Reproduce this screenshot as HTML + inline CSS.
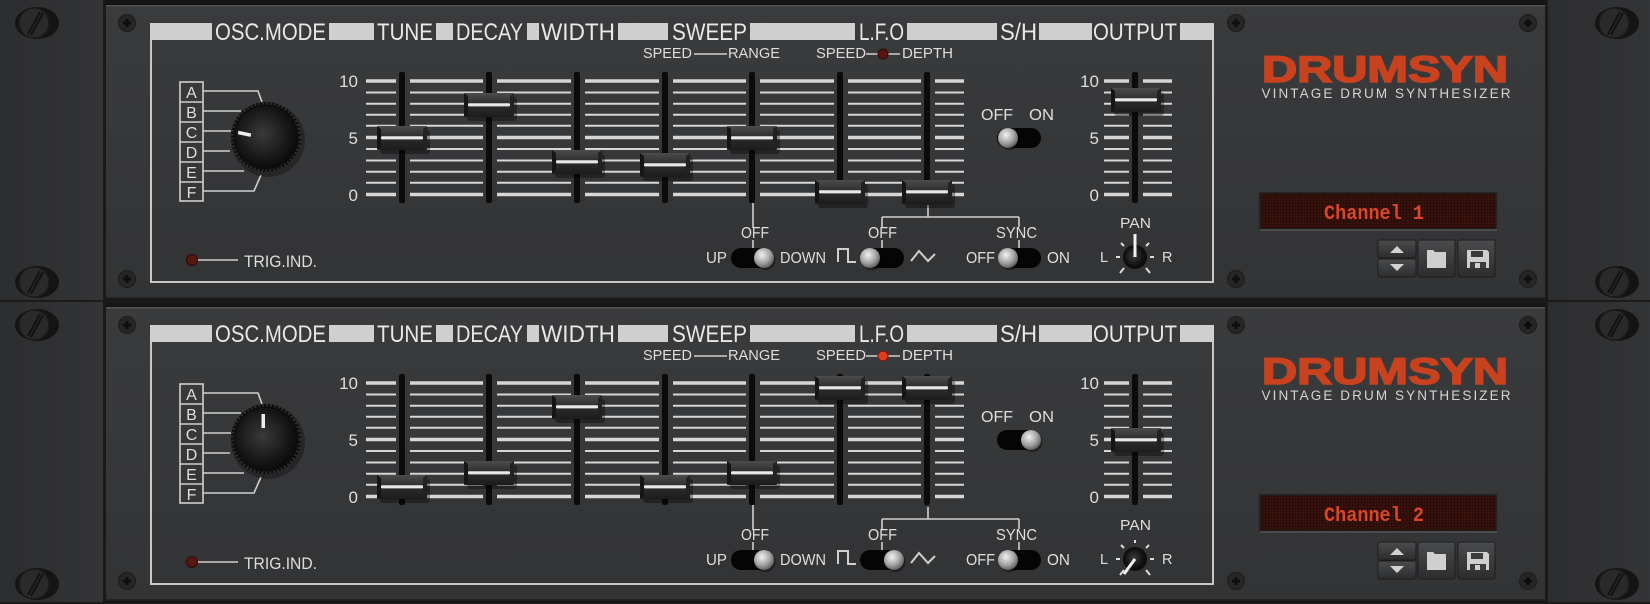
<!DOCTYPE html>
<html><head><meta charset="utf-8"><style>
html,body{margin:0;padding:0;background:#151515;width:1650px;height:604px;overflow:hidden}
svg{display:block}
text{font-family:"Liberation Sans",sans-serif}
</style></head><body>
<svg width="1650" height="604" viewBox="0 0 1650 604" xmlns="http://www.w3.org/2000/svg">
<defs>
<linearGradient id="pg" x1="0" y1="0" x2="0" y2="1"><stop offset="0" stop-color="#3a3b3d"/><stop offset="1" stop-color="#323335"/></linearGradient>
<linearGradient id="eg" x1="0" y1="0" x2="1" y2="0"><stop offset="0" stop-color="#2c2d2f"/><stop offset="1" stop-color="#333436"/></linearGradient>
<linearGradient id="hg" x1="0" y1="0" x2="0" y2="1"><stop offset="0" stop-color="#4c4c4c"/><stop offset=".45" stop-color="#2e2e2e"/><stop offset="1" stop-color="#1c1c1c"/></linearGradient>
<radialGradient id="bg" cx=".4" cy=".35" r=".7"><stop offset="0" stop-color="#f2f2f2"/><stop offset=".6" stop-color="#a0a0a0"/><stop offset="1" stop-color="#555"/></radialGradient>
<radialGradient id="kg" cx=".45" cy=".45" r=".6"><stop offset="0" stop-color="#3a3a3a"/><stop offset=".7" stop-color="#161616"/><stop offset="1" stop-color="#080808"/></radialGradient>
<linearGradient id="btn" x1="0" y1="0" x2="0" y2="1"><stop offset="0" stop-color="#4a4b4d"/><stop offset="1" stop-color="#2c2d2f"/></linearGradient>
<pattern id="dots" width="3" height="3" patternUnits="userSpaceOnUse"><rect width="3" height="3" fill="#2a0d08"/><rect width="2" height="2" fill="#3a140c"/></pattern>

<g id="seg" stroke="#d6d6d6">
<path d="M366,0H396M410,0H483M497,0H571M585,0H659M673,0H746M760,0H834M848,0H921M935,0H964M1104,0H1129M1143,0H1172"/>
</g>
<g id="handle">
<rect x="-22" y="-8" width="50" height="24" fill="#000" opacity=".35" rx="3"/>
<rect x="-25" y="-12" width="50" height="24" fill="url(#hg)" rx="2"/>
<path d="M-25,-12L-21,-9V9L-25,12Z" fill="#151515"/>
<path d="M25,-12L21,-9V9L25,12Z" fill="#222"/>
<rect x="-21" y="-1.8" width="42" height="3.2" fill="#e8e8e8" rx="1"/>
</g>
<g id="ball"><circle cx="1.5" cy="2" r="10" fill="#000" opacity=".4"/><circle r="10" fill="url(#bg)"/></g>
<g id="pscrew"><circle r="9" fill="#1c1c1c"/><circle r="8" fill="#262626"/><path d="M-4,0H4M0,-4V4" stroke="#0e0e0e" stroke-width="3"/></g>
<g id="escrew"><ellipse rx="22" ry="16" fill="#141414"/><circle cx="-3" r="15" fill="#2a2a2a"/><circle cx="-3" r="15" fill="none" stroke="#1a1a1a" stroke-width="1.5"/><path d="M-9,11L3,-11M-6,12L6,-10" stroke="#121212" stroke-width="2"/></g>

<g id="static">
<rect x="0" y="0" width="105" height="302" fill="url(#eg)"/>
<rect x="103" y="0" width="3" height="302" fill="#1a1a1a"/>
<rect x="1545" y="0" width="105" height="302" fill="url(#eg)"/>
<rect x="1545" y="0" width="3" height="302" fill="#1a1a1a"/>
<rect x="0" y="300" width="1650" height="3" fill="#1b1b1b"/>
<use href="#escrew" x="37" y="23"/><use href="#escrew" x="37" y="282"/>
<use href="#escrew" x="1617" y="23"/><use href="#escrew" x="1617" y="282"/>
<rect x="106" y="5" width="1439" height="294" fill="url(#pg)"/>
<rect x="106" y="5" width="1439" height="1.5" fill="#505153"/>
<rect x="106" y="297" width="1439" height="2" fill="#222"/>
<use href="#pscrew" x="127" y="23"/><use href="#pscrew" x="127" y="279"/>
<use href="#pscrew" x="1236" y="23"/><use href="#pscrew" x="1236" y="279"/>
<use href="#pscrew" x="1528" y="23"/><use href="#pscrew" x="1528" y="279"/>
<g fill="#cfcfcf">
<rect x="150" y="23" width="62" height="17"/><rect x="329" y="23" width="45" height="17"/>
<rect x="436" y="23" width="17" height="17"/><rect x="527" y="23" width="12" height="17"/>
<rect x="618" y="23" width="50" height="17"/><rect x="750" y="23" width="105" height="17"/>
<rect x="907" y="23" width="90" height="17"/><rect x="1039" y="23" width="53" height="17"/>
<rect x="1180" y="23" width="34" height="17"/>
</g>
<path d="M151,40V282H1213V40" fill="none" stroke="#c8c8c8" stroke-width="2"/>
<g stroke-width="2"><use href="#seg" y="92.5"/><use href="#seg" y="103.7"/><use href="#seg" y="114.7"/><use href="#seg" y="125.7"/><use href="#seg" y="149"/><use href="#seg" y="160.5"/><use href="#seg" y="171.7"/><use href="#seg" y="182.7"/></g>
<g stroke-width="3.6"><use href="#seg" y="81"/><use href="#seg" y="137.5"/><use href="#seg" y="194.5"/></g>
<g fill="#0b0b0b"><rect x="399" y="72" width="6" height="131" rx="2"/><rect x="486" y="72" width="6" height="131" rx="2"/><rect x="574" y="72" width="6" height="131" rx="2"/><rect x="662" y="72" width="6" height="131" rx="2"/><rect x="749" y="72" width="6" height="131" rx="2"/><rect x="837" y="72" width="6" height="131" rx="2"/><rect x="924" y="72" width="6" height="131" rx="2"/><rect x="1132" y="72" width="6" height="131" rx="2"/></g>
<g fill="none" stroke="#cfcfcf" stroke-width="1.6">
<rect x="180" y="82" width="23" height="119"/>
<path d="M180,102H203M180,122H203M180,142H203M180,162H203M180,182H203"/>
<path d="M203,91H258L262,102M203,111H241M203,131H231M203,151H230M203,171H244M203,191H254L261,175"/>
<path d="M198,260H238"/>
<path d="M694,54H727"/>
<path d="M866,54H900"/>
<path d="M753,203V228M753,240V248M928,205V217M882,217H1019M882,217V227M1019,217V227M882,240V248M1019,240V248"/>
<path d="M838,262V249H848V262H856" stroke-width="2"/>
<path d="M911,261L919,251L928,261L935,254" stroke-width="2"/>
</g>
<circle cx="268" cy="140" r="37" fill="#000" opacity=".3"/>
<circle cx="266" cy="137" r="35" fill="#0d0d0d"/>
<circle cx="266" cy="137" r="34" fill="none" stroke="#2c2c2c" stroke-width="3" stroke-dasharray="2 2"/>
<circle cx="266" cy="137" r="31" fill="url(#kg)"/>
<circle cx="192" cy="260" r="5.5" fill="#5a1610" stroke="#2a0a06"/>
<rect x="1260" y="193" width="236" height="36" fill="url(#dots)"/>
<rect x="1260" y="193" width="236" height="36" fill="none" stroke="#1e1e1e" stroke-width="1.5"/>
<path d="M1260,230H1497" stroke="#55565a" stroke-width="1.5"/>
<rect x="1378" y="240" width="38" height="18" rx="2" fill="url(#btn)" stroke="#1d1d1d"/>
<rect x="1378" y="259" width="38" height="18" rx="2" fill="url(#btn)" stroke="#1d1d1d"/>
<rect x="1418" y="240" width="37" height="37" rx="2" fill="url(#btn)" stroke="#1d1d1d"/>
<rect x="1458" y="240" width="37" height="37" rx="2" fill="url(#btn)" stroke="#1d1d1d"/>
<path d="M1390,253L1397,246L1404,253Z M1390,264L1404,264L1397,271Z" fill="#d2d2d2"/>
<path d="M1427,250H1433L1435,252H1446V268H1427Z" fill="#cfcfcf"/>
<path d="M1467,250H1487L1489,252V268H1467Z" fill="#cfcfcf"/>
<rect x="1471" y="251" width="12" height="6" fill="#3a3b3d"/>
<rect x="1470" y="262" width="16" height="6" fill="#3a3b3d"/>
<rect x="1475" y="263" width="5" height="5" fill="#cfcfcf"/>
<g stroke="#dcdcdc" stroke-width="2">
<path d="M1120,257H1116M1150,257H1154M1124,246L1121,243M1146,246L1149,243M1135,241V238M1124,268L1120,273M1146,268L1150,273"/>
</g>
<circle cx="1135" cy="257" r="12" fill="#0e0e0e"/>
<circle cx="1135" cy="257" r="10" fill="url(#kg)"/>
<rect x="997" y="128" width="44" height="20" rx="10" fill="#050505"/>
<rect x="731" y="248" width="43" height="20" rx="10" fill="#050505"/>
<rect x="860" y="248" width="44" height="20" rx="10" fill="#050505"/>
<rect x="999" y="248" width="42" height="20" rx="10" fill="#050505"/>
</g>
</defs>

<!-- UNIT 1 -->
<g>
<use href="#static"/>
<g fill="#e8e8e8" font-size="24">
<text x="215" y="40" textLength="111" lengthAdjust="spacingAndGlyphs">OSC.MODE</text>
<text x="377" y="40" textLength="56" lengthAdjust="spacingAndGlyphs">TUNE</text>
<text x="456" y="40" textLength="67" lengthAdjust="spacingAndGlyphs">DECAY</text>
<text x="541" y="40" textLength="74" lengthAdjust="spacingAndGlyphs">WIDTH</text>
<text x="672" y="40" textLength="75" lengthAdjust="spacingAndGlyphs">SWEEP</text>
<text x="859" y="40" textLength="45" lengthAdjust="spacingAndGlyphs">L.F.O</text>
<text x="1000" y="40" textLength="37" lengthAdjust="spacingAndGlyphs">S/H</text>
<text x="1093" y="40" textLength="84" lengthAdjust="spacingAndGlyphs">OUTPUT</text>
</g>
<g fill="#dedede" font-size="17">
<text x="191.5" y="98" text-anchor="middle" font-size="16">A</text>
<text x="191.5" y="118" text-anchor="middle" font-size="16">B</text>
<text x="191.5" y="138" text-anchor="middle" font-size="16">C</text>
<text x="191.5" y="158" text-anchor="middle" font-size="16">D</text>
<text x="191.5" y="178" text-anchor="middle" font-size="16">E</text>
<text x="191.5" y="198" text-anchor="middle" font-size="16">F</text>
<text x="358" y="87" text-anchor="end">10</text><text x="358" y="144" text-anchor="end">5</text><text x="358" y="201" text-anchor="end">0</text>
<text x="1099" y="87" text-anchor="end">10</text><text x="1099" y="144" text-anchor="end">5</text><text x="1099" y="201" text-anchor="end">0</text>
<text x="244" y="267" textLength="73" lengthAdjust="spacingAndGlyphs">TRIG.IND.</text>
</g>
<g fill="#dedede" font-size="14.5">
<text x="643" y="58" textLength="49" lengthAdjust="spacingAndGlyphs">SPEED</text>
<text x="728" y="58" textLength="52" lengthAdjust="spacingAndGlyphs">RANGE</text>
<text x="816" y="58" textLength="50" lengthAdjust="spacingAndGlyphs">SPEED</text>
<text x="902" y="58" textLength="51" lengthAdjust="spacingAndGlyphs">DEPTH</text>
<text x="981" y="120" font-size="15.5" textLength="32" lengthAdjust="spacingAndGlyphs">OFF</text>
<text x="1029" y="120" font-size="15.5" textLength="25" lengthAdjust="spacingAndGlyphs">ON</text>
<text x="741" y="238" font-size="15.5" textLength="28" lengthAdjust="spacingAndGlyphs">OFF</text>
<text x="868" y="238" font-size="15.5" textLength="29" lengthAdjust="spacingAndGlyphs">OFF</text>
<text x="996" y="238" font-size="15.5" textLength="41" lengthAdjust="spacingAndGlyphs">SYNC</text>
<text x="706" y="263" font-size="15.5" textLength="21" lengthAdjust="spacingAndGlyphs">UP</text>
<text x="780" y="263" font-size="15.5" textLength="46" lengthAdjust="spacingAndGlyphs">DOWN</text>
<text x="966" y="263" font-size="15.5" textLength="29" lengthAdjust="spacingAndGlyphs">OFF</text>
<text x="1047" y="263" font-size="15.5" textLength="23" lengthAdjust="spacingAndGlyphs">ON</text>
<text x="1120" y="228" textLength="31" lengthAdjust="spacingAndGlyphs">PAN</text>
<text x="1100" y="262">L</text><text x="1162" y="262">R</text>
</g>
<circle cx="883" cy="54" r="5" fill="#5a1610" stroke="#2a0a06"/>
<rect x="238" y="132" width="13" height="3.5" fill="#eee" transform="rotate(12 244 134)"/>
<path d="M1135,257V234" stroke="#f0f0f0" stroke-width="3"/>
<use href="#ball" x="1008" y="138"/><use href="#ball" x="764" y="258"/><use href="#ball" x="870" y="258"/><use href="#ball" x="1008" y="258"/>
<use href="#handle" x="402" y="138"/><use href="#handle" x="489" y="105"/><use href="#handle" x="577" y="162"/><use href="#handle" x="665" y="165"/><use href="#handle" x="752" y="138"/><use href="#handle" x="840" y="192"/><use href="#handle" x="927" y="192"/>
<use href="#handle" x="1136" y="100"/>
<text x="1385" y="82" text-anchor="middle" font-size="37" font-weight="bold" fill="#c8421f" stroke="#c8421f" stroke-width="1.6" textLength="246" lengthAdjust="spacingAndGlyphs">DRUMSYN</text>
<text x="1386" y="98" text-anchor="middle" font-size="13.5" fill="#d4d4d4" textLength="249" lengthAdjust="spacing">VINTAGE DRUM SYNTHESIZER</text>
<text x="1374" y="219" text-anchor="middle" font-size="20" font-weight="bold" fill="#d9462a" style="font-family:'Liberation Mono',monospace" textLength="100" lengthAdjust="spacingAndGlyphs">Channel 1</text>
</g>

<!-- UNIT 2 -->
<g transform="translate(0,302)">
<use href="#static"/>
<g fill="#e8e8e8" font-size="24">
<text x="215" y="40" textLength="111" lengthAdjust="spacingAndGlyphs">OSC.MODE</text>
<text x="377" y="40" textLength="56" lengthAdjust="spacingAndGlyphs">TUNE</text>
<text x="456" y="40" textLength="67" lengthAdjust="spacingAndGlyphs">DECAY</text>
<text x="541" y="40" textLength="74" lengthAdjust="spacingAndGlyphs">WIDTH</text>
<text x="672" y="40" textLength="75" lengthAdjust="spacingAndGlyphs">SWEEP</text>
<text x="859" y="40" textLength="45" lengthAdjust="spacingAndGlyphs">L.F.O</text>
<text x="1000" y="40" textLength="37" lengthAdjust="spacingAndGlyphs">S/H</text>
<text x="1093" y="40" textLength="84" lengthAdjust="spacingAndGlyphs">OUTPUT</text>
</g>
<g fill="#dedede" font-size="17">
<text x="191.5" y="98" text-anchor="middle" font-size="16">A</text>
<text x="191.5" y="118" text-anchor="middle" font-size="16">B</text>
<text x="191.5" y="138" text-anchor="middle" font-size="16">C</text>
<text x="191.5" y="158" text-anchor="middle" font-size="16">D</text>
<text x="191.5" y="178" text-anchor="middle" font-size="16">E</text>
<text x="191.5" y="198" text-anchor="middle" font-size="16">F</text>
<text x="358" y="87" text-anchor="end">10</text><text x="358" y="144" text-anchor="end">5</text><text x="358" y="201" text-anchor="end">0</text>
<text x="1099" y="87" text-anchor="end">10</text><text x="1099" y="144" text-anchor="end">5</text><text x="1099" y="201" text-anchor="end">0</text>
<text x="244" y="267" textLength="73" lengthAdjust="spacingAndGlyphs">TRIG.IND.</text>
</g>
<g fill="#dedede" font-size="14.5">
<text x="643" y="58" textLength="49" lengthAdjust="spacingAndGlyphs">SPEED</text>
<text x="728" y="58" textLength="52" lengthAdjust="spacingAndGlyphs">RANGE</text>
<text x="816" y="58" textLength="50" lengthAdjust="spacingAndGlyphs">SPEED</text>
<text x="902" y="58" textLength="51" lengthAdjust="spacingAndGlyphs">DEPTH</text>
<text x="981" y="120" font-size="15.5" textLength="32" lengthAdjust="spacingAndGlyphs">OFF</text>
<text x="1029" y="120" font-size="15.5" textLength="25" lengthAdjust="spacingAndGlyphs">ON</text>
<text x="741" y="238" font-size="15.5" textLength="28" lengthAdjust="spacingAndGlyphs">OFF</text>
<text x="868" y="238" font-size="15.5" textLength="29" lengthAdjust="spacingAndGlyphs">OFF</text>
<text x="996" y="238" font-size="15.5" textLength="41" lengthAdjust="spacingAndGlyphs">SYNC</text>
<text x="706" y="263" font-size="15.5" textLength="21" lengthAdjust="spacingAndGlyphs">UP</text>
<text x="780" y="263" font-size="15.5" textLength="46" lengthAdjust="spacingAndGlyphs">DOWN</text>
<text x="966" y="263" font-size="15.5" textLength="29" lengthAdjust="spacingAndGlyphs">OFF</text>
<text x="1047" y="263" font-size="15.5" textLength="23" lengthAdjust="spacingAndGlyphs">ON</text>
<text x="1120" y="228" textLength="31" lengthAdjust="spacingAndGlyphs">PAN</text>
<text x="1100" y="262">L</text><text x="1162" y="262">R</text>
</g>
<circle cx="883" cy="54" r="5" fill="#e23a1e" stroke="#7a1a0c"/>
<rect x="261.5" y="112" width="3.5" height="14" fill="#eee"/>
<path d="M1135,257L1124,272" stroke="#f0f0f0" stroke-width="3"/>
<use href="#ball" x="1031" y="138"/><use href="#ball" x="764" y="258"/><use href="#ball" x="894" y="258"/><use href="#ball" x="1008" y="258"/>
<use href="#handle" x="402" y="185"/><use href="#handle" x="489" y="171"/><use href="#handle" x="577" y="105"/><use href="#handle" x="665" y="185"/><use href="#handle" x="752" y="171"/><use href="#handle" x="840" y="86"/><use href="#handle" x="927" y="86"/>
<use href="#handle" x="1136" y="138"/>
<text x="1385" y="82" text-anchor="middle" font-size="37" font-weight="bold" fill="#c8421f" stroke="#c8421f" stroke-width="1.6" textLength="246" lengthAdjust="spacingAndGlyphs">DRUMSYN</text>
<text x="1386" y="98" text-anchor="middle" font-size="13.5" fill="#d4d4d4" textLength="249" lengthAdjust="spacing">VINTAGE DRUM SYNTHESIZER</text>
<text x="1374" y="219" text-anchor="middle" font-size="20" font-weight="bold" fill="#d9462a" style="font-family:'Liberation Mono',monospace" textLength="100" lengthAdjust="spacingAndGlyphs">Channel 2</text>
</g>
</svg>
</body></html>
